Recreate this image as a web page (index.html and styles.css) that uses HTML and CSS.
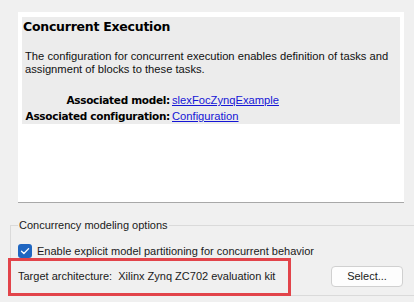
FILE: index.html
```html
<!DOCTYPE html>
<html>
<head>
<meta charset="utf-8">
<link rel="stylesheet" href="styles.css">
</head>
<body>
<div class="page">
  <div class="panel">
    <div class="info">
      <div class="title">Concurrent Execution</div>
      <p class="desc">The configuration for concurrent execution enables definition of tasks and assignment of blocks to these tasks.</p>
      <div class="assoc">
        <div class="label">Associated model:</div><a class="link" href="#">slexFocZynqExample</a>
        <div class="label">Associated configuration:</div><a class="link" href="#">Configuration</a>
      </div>
    </div>
  </div>
  <fieldset class="group">
    <legend class="legend">Concurrency modeling options</legend>
    <label class="check-row"><span class="checkbox"><svg width="14" height="14" viewBox="0 0 14 14"><path d="M3.5 7.2 L5.9 9.5 L10.6 4.6" fill="none" stroke="#fff" stroke-width="1.3" stroke-linecap="round" stroke-linejoin="round"/></svg></span>Enable explicit model partitioning for concurrent behavior</label>
    <div class="target-row">
      <span class="target">Target architecture:&nbsp; Xilinx Zynq ZC702 evaluation kit</span>
      <button class="select-btn">Select...</button>
      <span class="highlight"></span>
    </div>
  </fieldset>
  <span class="tick tick-left"></span>
  <span class="tick tick-right"></span>
</div>
</body>
</html>
```
FILE: styles.css
```css
html, body {
  margin: 0;
  padding: 0;
}
body {
  width: 414px;
  height: 302px;
  overflow: hidden;
  background: #f0f0f0;
  font-family: "Liberation Sans", Arial, sans-serif;
  color: #000;
}
.page {
  position: relative;
  height: 302px;
}
.panel {
  margin: 12px 10px 0 18px;
  height: 185px;
  background: #fff;
  border-bottom: 1px solid #a8a8a8;
  padding: 5px 4px 0 4px;
  box-sizing: content-box;
}
.info {
  background: #ececec;
  height: 107px;
  padding: 2px 0 0 1px;
  box-sizing: border-box;
}
.title {
  font-family: "DejaVu Sans", Verdana, sans-serif;
  font-weight: bold;
  font-size: 12.5px;
  letter-spacing: -0.25px;
  line-height: 16px;
}
.desc {
  margin: 15px 0 0 2px;
  font-size: 11.2px;
  line-height: 13px;
  color: #111;
}
.assoc {
  margin-top: 18px;
  display: grid;
  grid-template-columns: 149px auto;
  row-gap: 3px;
  font-size: 11.2px;
  line-height: 13px;
  white-space: nowrap;
}
.label {
  font-family: "DejaVu Sans", Verdana, sans-serif;
  font-weight: bold;
  font-size: 10.5px;
  letter-spacing: -0.3px;
  text-align: right;
  padding-right: 2px;
  white-space: nowrap;
}
.link {
  color: #1515d6;
  text-decoration: underline;
}
.group {
  margin: 15px 0 0 10px;
  padding: 0 0 0 7px;
  height: 78px;
  box-sizing: border-box;
  border: 1px solid #dadada;
  border-right: none;
  font-family: "Liberation Sans", Arial, sans-serif;
  font-size: 11px;
}
.legend {
  padding: 0 1px;
  margin-left: 0;
  line-height: 14px;
  color: #1a1a1a;
}
.check-row {
  display: flex;
  align-items: center;
  gap: 5px;
  margin-top: 12px;
  height: 14px;
  color: #1a1a1a;
}
.checkbox {
  width: 14px;
  height: 14px;
  border-radius: 3px;
  background: #1f66c1;
  display: flex;
}
.target-row {
  position: relative;
  display: flex;
  align-items: center;
  justify-content: space-between;
  margin-top: 8px;
  height: 20px;
  padding-right: 11px;
  color: #1a1a1a;
}
.target {
  margin-left: 0;
}
.select-btn {
  width: 72px;
  height: 21px;
  background: #fdfdfd;
  border: 1px solid #d0d0d0;
  border-radius: 4px;
  font-family: "Liberation Sans", Arial, sans-serif;
  font-size: 11px;
  color: #1a1a1a;
  padding: 0;
}
.highlight {
  position: absolute;
  left: -10px;
  top: -8px;
  width: 283px;
  height: 38px;
  border: 3px solid #e2444a;
  box-sizing: border-box;
}
.tick {
  position: absolute;
  width: 2px;
  height: 4px;
  background: #222;
  top: 298px;
}
.tick-left { left: 0; }
.tick-right { left: 412px; }
```
